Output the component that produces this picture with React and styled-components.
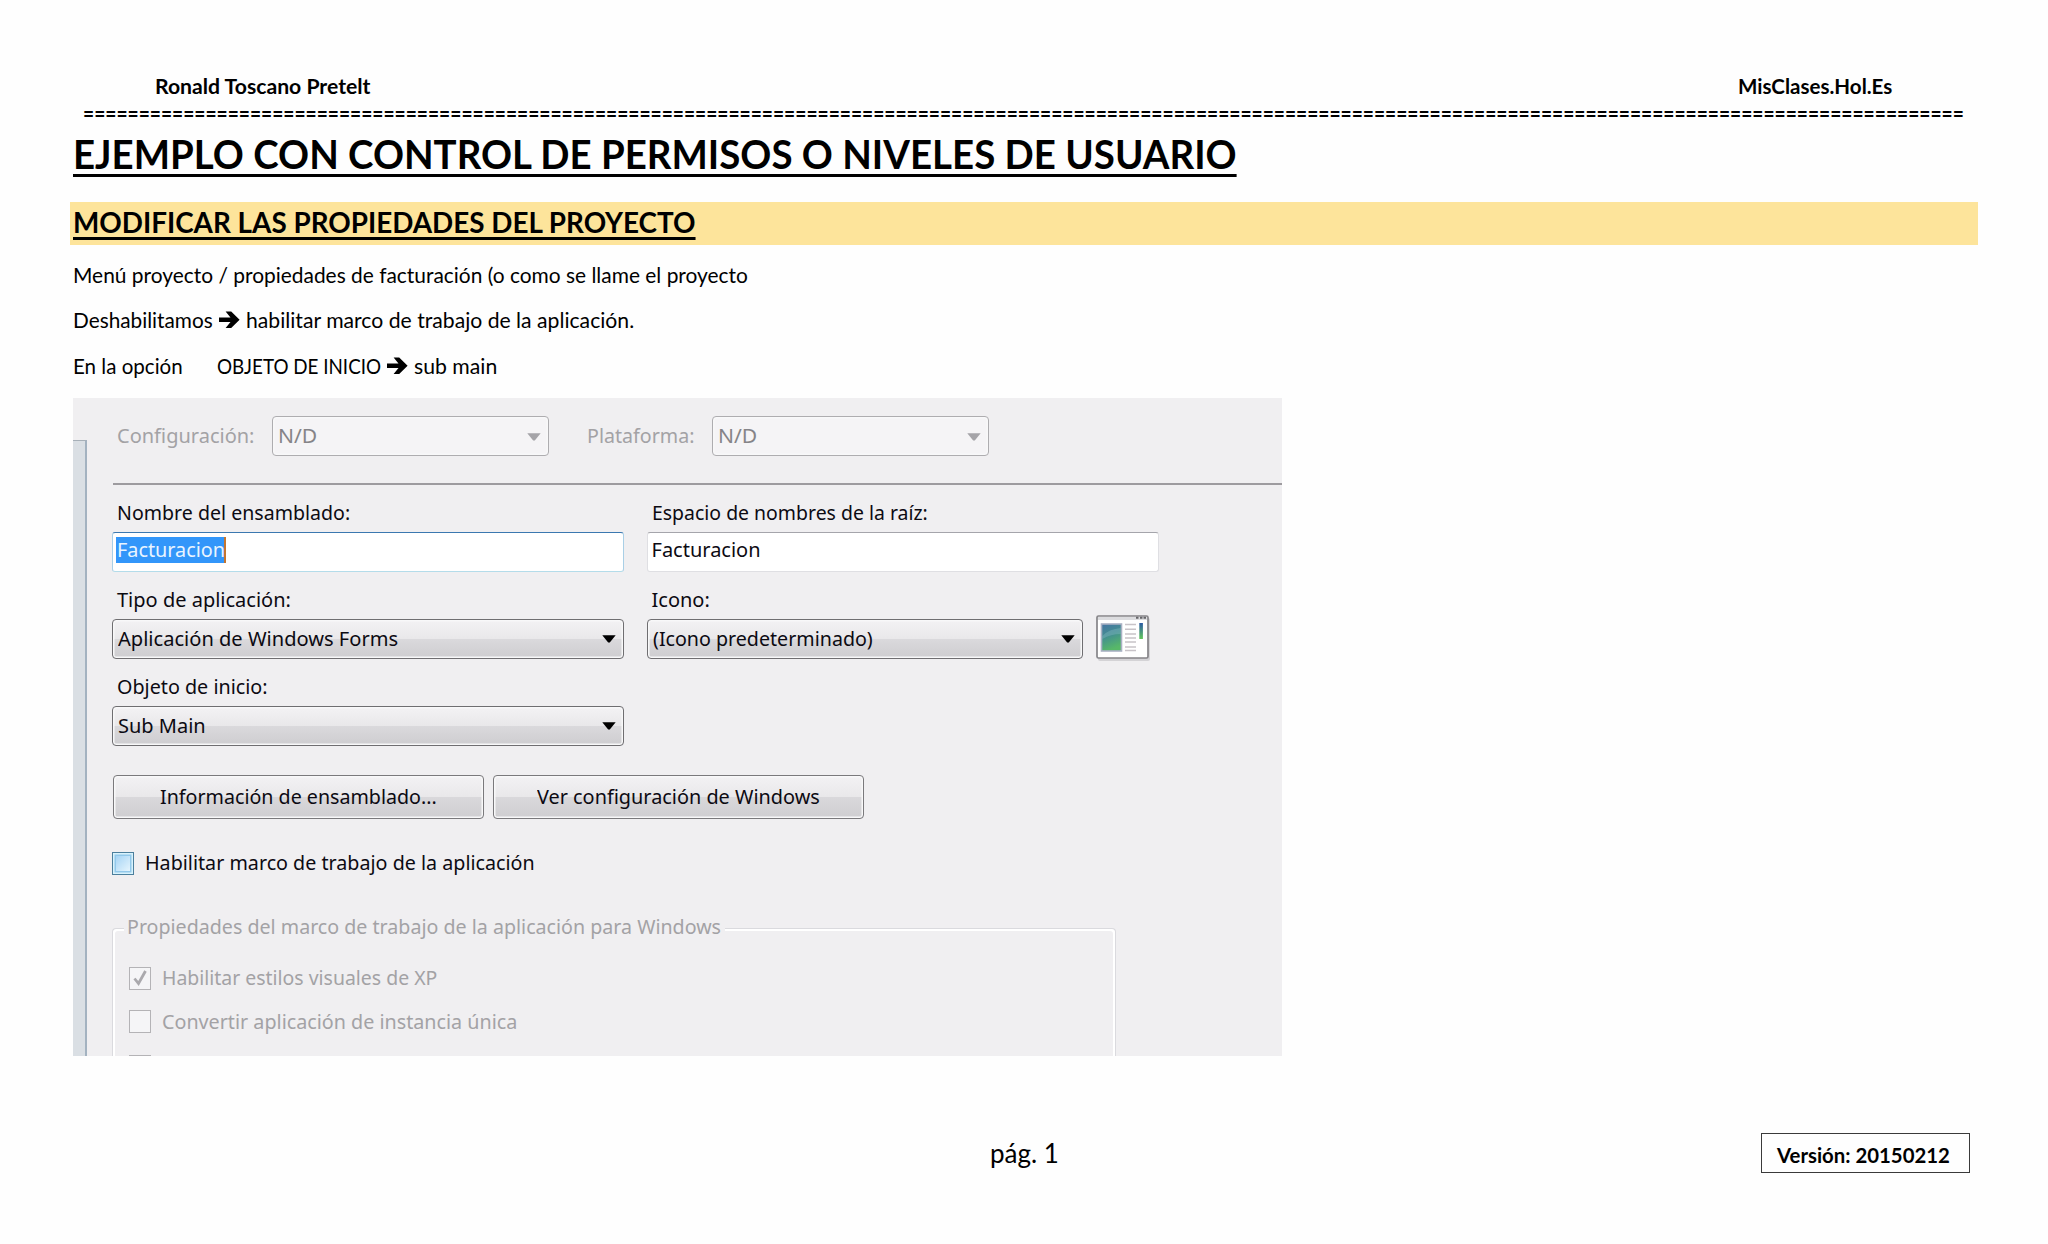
import React, { useLayoutEffect, useRef, useState } from 'react';
import styled, { createGlobalStyle, css } from 'styled-components';

const Global = createGlobalStyle`
  *, *::before, *::after { box-sizing: border-box; }
  body { margin: 0; background: #fefefe; }
`;

const docFont = "Lato, 'Liberation Sans', sans-serif";
const formFont = "'Noto Sans', 'Liberation Sans', sans-serif";

/* ---------- text set to an exact measure ---------- */

const Measure = styled.span`
  display: block;
  flex: none;
  width: ${(p) => p.$width}px;
  margin-left: ${(p) => p.$gap || 0}px;
  white-space: pre;
`;

const Glyphs = styled.span`
  display: inline-block;
  transform-origin: 0 50%;
`;

function Fit({ width, gap, children }) {
  const ref = useRef(null);
  const [scale, setScale] = useState(1);
  useLayoutEffect(() => {
    setScale(width / ref.current.offsetWidth);
  }, [width]);
  return (
    <Measure $width={width} $gap={gap}>
      <Glyphs ref={ref} style={{ transform: `scaleX(${scale})` }}>{children}</Glyphs>
    </Measure>
  );
}

/* ---------- document ---------- */

const Page = styled.main`
  display: flex;
  flex-direction: column;
  width: 2048px;
  height: 1244px;
  padding-top: 73px;
  overflow: hidden;
  background: #fefefe;
  color: #000;
  font: 400 20.2px/26px ${docFont};
`;

const Header = styled.header`
  display: flex;
  justify-content: space-between;
  height: 26px;
  padding: 0 156px 0 155px;
  font-size: 20px;
  font-weight: 700;
`;

const Rule = styled.div`
  height: 24px;
  margin: 2px 0 0 83px;
  font-weight: 700;
  line-height: 24px;
`;

const Title = styled.h1`
  height: 50px;
  margin: 4px 0 0 73px;
  font-size: 39.8px;
  font-weight: 700;
  line-height: 50px;
`;

const Banner = styled.h2`
  width: 1908px;
  height: 42.5px;
  margin: 23px 0 7.5px 70px;
  padding-left: 3px;
  background: #fde49b;
  font-size: 28.2px;
  font-weight: 700;
  line-height: 41px;
`;

const Underlined = styled.span`
  text-decoration: underline ${(p) => p.$thick}px;
  text-underline-offset: ${(p) => p.$offset}px;
  text-decoration-skip-ink: none;
`;

const Line = styled.p`
  display: flex;
  align-items: center;
  height: 45.5px;
  margin: 0;
  padding-left: 73px;
`;

const ArrowMark = styled.svg`
  display: block;
  flex: none;
  width: 21px;
  height: 18px;
  margin: 0 6px;
`;

const Arrow = () => (
  <ArrowMark viewBox="0 0 21 18">
    <path d="M0 6.6H11.5L6.6 .6H12.2L20.6 8.7 12.2 17H6.6L11.5 11H0Z" />
  </ArrowMark>
);

const Footer = styled.footer`
  display: grid;
  grid-template-columns: 1760px 210px;
  align-items: center;
  height: 40px;
  margin-top: 77px;
`;

const PageNumber = styled.div`
  padding-left: 990px;
  font-size: 26px;
  line-height: 40px;
`;

const Version = styled.div`
  height: 40px;
  margin-left: 1px;
  padding-left: 15px;
  border: 1.5px solid #3a3a3a;
  font-size: 20px;
  font-weight: 700;
  line-height: 42px;
`;

/* ---------- project properties form ---------- */

const Panel = styled.section`
  display: flex;
  width: 1208.5px;
  height: 658px;
  margin: 9px 0 0 73px;
  overflow: hidden;
  background: #f0eff1;
  color: #0c0a12;
  font: 400 20px/26px ${formFont};
`;

const Strip = styled.div`
  flex: none;
  width: 14px;
  margin-top: 42px;
  border-top: 1.5px solid #a7b0b8;
  border-right: 2px solid #a3b2c0;
  background: #dadfe4;
`;

const Form = styled.div`
  flex: 1;
  padding: 18.5px 0 0 25px;
`;

const Toolbar = styled.div`
  display: flex;
  align-items: center;
  height: 40px;
  padding-left: 5px;
  color: #a3a2a5;
`;

const Divider = styled.div`
  height: 2px;
  margin: 26.5px 0 15.5px 1px;
  background: #9d9b9f;
`;

const Fields = styled.div`
  display: grid;
  grid-template-columns: 512px 512px;
  column-gap: 22.5px;
  row-gap: 15.5px;
`;

const Field = styled.div`
  display: flex;
  flex-direction: column;
  gap: 5.5px;
`;

const Label = styled.div`
  height: 26px;
  padding-left: 5px;
`;

const Input = styled.div`
  display: flex;
  height: 40px;
  padding: 5px 4px;
  border: 1.5px solid #dfdfe3;
  border-top-color: #a5a5ab;
  border-radius: 3px;
  background: #fff;
  line-height: 24px;
  ${(p) => p.$focused && css`
    border-color: #a9cfe6;
    border-top-color: #3b78b0;
    border-bottom-color: #b4dcea;
    padding: 4px 3px;
    line-height: 26px;
  `}
`;

const Selection = styled.span`
  height: 26px;
  width: 110px;
  padding-left: 1px;
  border-right: 2px solid #c4752f;
  background: #3296fa;
  color: #e8f4ff;
`;

const SelectBox = styled.div`
  display: flex;
  align-items: center;
  justify-content: space-between;
  flex: none;
  width: ${(p) => p.$width}px;
  height: 40px;
  margin-left: ${(p) => p.$gap || 0}px;
  padding: 0 7px 0 5px;
  border: 1.75px solid #6f6e71;
  border-radius: 4px;
  background: linear-gradient(#f3f2f4, #e9e8ea 49%, #dad9dc 51%, #cecdd0);
  box-shadow: inset 0 0 0 1.5px #f8f8f9;
  ${(p) => p.$disabled && css`
    border-color: #aeadb0;
    background: #f5f4f6;
    color: #858488;
  `}
`;

const Caret = styled.svg`
  display: block;
  width: 14px;
  height: 8px;
  margin-top: 1px;
  fill: ${(p) => (p.$disabled ? '#a5a4a8' : '#000')};
`;

function Select({ width, gap, disabled, textWidth, children }) {
  return (
    <SelectBox $width={width} $gap={gap} $disabled={disabled}>
      <Fit width={textWidth}>{children}</Fit>
      <Caret $disabled={disabled} viewBox="0 0 14 8"><path d="M.3 .3H13.7L7.8 7.6H6.2Z" /></Caret>
    </SelectBox>
  );
}

const IconRow = styled.div`
  display: flex;
  align-items: flex-start;
  gap: 13.5px;
  height: 40px;
`;

const WindowIcon = styled.svg`
  display: block;
  flex: none;
  width: 56px;
  height: 47px;
  margin-top: -4px;
`;

const Buttons = styled.div`
  display: flex;
  gap: 9px;
  margin: 29.5px 0 32px 1px;
`;

const Button = styled.div`
  display: flex;
  justify-content: center;
  width: 371px;
  height: 43.5px;
  margin-bottom: 0.5px;
  border: 1.75px solid #7a797c;
  border-radius: 4px;
  background: linear-gradient(#f3f2f4, #e9e8ea 49%, #d9d8db 51%, #cfced1);
  box-shadow: inset 0 0 0 1.5px #f8f8f9;
  line-height: 42px;
`;

const CheckRow = styled.div`
  display: flex;
  align-items: center;
  height: 24px;
  line-height: 24px;
  margin-bottom: ${(p) => p.$after || 0}px;
`;

const Box = styled.span`
  display: flex;
  flex: none;
  align-items: center;
  justify-content: center;
  width: 22.5px;
  height: 23px;
  border: 1.75px solid #b4b3b6;
  background: #f5f5f7;
  ${(p) => p.$hot && css`
    margin-left: -0.5px;
    border-color: #4b7f9d;
    background: linear-gradient(135deg, #a2d2f4, #e9f7fe) content-box, #d5f0fb;
    padding: 2px;
    box-shadow: inset 0 0 0 1.5px #d8f2fc, inset 0 0 0 3px #92c8ea;
  `}
`;

const Tick = styled.svg`
  display: block;
  width: 14px;
  height: 16px;
  fill: none;
  stroke: #aaa9ad;
  stroke-width: 2.8;
`;

const Group = styled.div`
  width: 1004.5px;
  margin: 39px 0 0 -0.5px;
  color: #a3a2a5;
`;

const Legend = styled.div`
  display: flex;
  height: 26px;
  line-height: 26px;
`;

const Edge = styled.span`
  flex: ${(p) => (p.$short ? '0 0 12px' : '1')};
  align-self: flex-end;
  height: 12px;
  margin-left: ${(p) => (p.$short ? 0 : 4)}px;
  border: 0 solid #dadade;
  border-top-width: 1.5px;
  ${(p) => (p.$short
    ? 'border-left-width: 1.5px; border-top-left-radius: 4px; box-shadow: inset 2px 2px 0 #fff;'
    : 'border-right-width: 1.5px; border-top-right-radius: 4px; box-shadow: inset -2px 2px 0 #fff;')}
`;

const GroupBody = styled.div`
  height: 120px;
  padding: 26px 0 0 16px;
  border: 0 solid #dadade;
  border-left-width: 1.5px;
  border-right-width: 1.5px;
  box-shadow: inset 2px 0 0 #fff, inset -2px 0 0 #fff;
`;

const PreviewIcon = () => (
  <WindowIcon viewBox="0 0 56 47">
    <defs>
      <linearGradient id="photo" x1="0" y1="0" x2=".3" y2="1">
        <stop offset="0" stopColor="#4573a4" />
        <stop offset=".5" stopColor="#43908f" />
        <stop offset="1" stopColor="#57b868" />
      </linearGradient>
      <linearGradient id="bar" x1="0" y1="0" x2="0" y2="1">
        <stop offset="0" stopColor="#2c5aa4" />
        <stop offset="1" stopColor="#62c85a" />
      </linearGradient>
    </defs>
    <rect x="2" y="3" width="52" height="43" rx="2" fill="#d4d3d6" />
    <rect x="1" y="1" width="51" height="42" rx="1.5" fill="#fff" stroke="#858488" strokeWidth="1.7" />
    <path d="M2 2H51V5H2Z" fill="#dcdcdf" />
    <path d="M40 2.8H42.5M44 2.8H46.5M47.5 2.8H50" stroke="#66656a" strokeWidth="2" />
    <rect x="5.5" y="9" width="20" height="27" fill="url(#photo)" stroke="#a9b1c4" strokeWidth="1.6" />
    <path d="M6.3 21Q13 14 24.7 13V19Q15 19 6.3 24Z" fill="#8ec0cb" opacity=".35" />
    <path d="M29 9.5H40M29 14.3H40M29 19H40M29 23H40M29 27H40M29 32H40M29 35.5H40" stroke="#c8c3c8" strokeWidth="1.4" />
    <rect x="43.3" y="8" width="3.6" height="16" fill="url(#bar)" />
  </WindowIcon>
);

export default function App() {
  return (
    <Page>
      <Global />
      <Header>
        <Fit width={215}>Ronald Toscano Pretelt</Fit>
        <Fit width={154}>MisClases.Hol.Es</Fit>
      </Header>
      <Rule><Fit width={1881}>{'='.repeat(169)}</Fit></Rule>
      <Title>
        <Fit width={1164}>
          <Underlined $thick={3} $offset={5}>EJEMPLO CON CONTROL DE PERMISOS O NIVELES DE USUARIO</Underlined>
        </Fit>
      </Title>
      <Banner>
        <Fit width={623}>
          <Underlined $thick={2.5} $offset={3.5}>MODIFICAR LAS PROPIEDADES DEL PROYECTO</Underlined>
        </Fit>
      </Banner>
      <Line><Fit width={674.5}>Menú proyecto / propiedades de facturación (o como se llame el proyecto</Fit></Line>
      <Line>
        <Fit width={140}>Deshabilitamos</Fit>
        <Arrow />
        <Fit width={388}>habilitar marco de trabajo de la aplicación.</Fit>
      </Line>
      <Line>
        <Fit width={110}>En la opción</Fit>
        <Fit width={164} gap={34}>OBJETO DE INICIO</Fit>
        <Arrow />
        <Fit width={83}>sub main</Fit>
      </Line>

      <Panel>
        <Strip />
        <Form>
          <Toolbar>
            <Fit width={137}>Configuración:</Fit>
            <Select disabled width={277} gap={18} textWidth={39}>N/D</Select>
            <Fit width={107} gap={38}>Plataforma:</Fit>
            <Select disabled width={277} gap={18} textWidth={39}>N/D</Select>
          </Toolbar>
          <Divider />
          <Fields>
            <Field>
              <Label><Fit width={233}>Nombre del ensamblado:</Fit></Label>
              <Input $focused><Selection><Fit width={108}>Facturacion</Fit></Selection></Input>
            </Field>
            <Field>
              <Label><Fit width={276}>Espacio de nombres de la raíz:</Fit></Label>
              <Input><Fit width={109}>Facturacion</Fit></Input>
            </Field>
            <Field>
              <Label><Fit width={174}>Tipo de aplicación:</Fit></Label>
              <Select width={512} textWidth={280}>Aplicación de Windows Forms</Select>
            </Field>
            <Field>
              <Label><Fit width={58}>Icono:</Fit></Label>
              <IconRow>
                <Select width={436} textWidth={220}>(Icono predeterminado)</Select>
                <PreviewIcon />
              </IconRow>
            </Field>
            <Field>
              <Label><Fit width={151}>Objeto de inicio:</Fit></Label>
              <Select width={512} textWidth={88}>Sub Main</Select>
            </Field>
          </Fields>
          <Buttons>
            <Button><Fit width={277}>Información de ensamblado...</Fit></Button>
            <Button><Fit width={283}>Ver configuración de Windows</Fit></Button>
          </Buttons>
          <CheckRow>
            <Box $hot />
            <Fit width={390} gap={10.5}>Habilitar marco de trabajo de la aplicación</Fit>
          </CheckRow>
          <Group>
            <Legend>
              <Edge $short />
              <Fit width={594} gap={3}>Propiedades del marco de trabajo de la aplicación para Windows</Fit>
              <Edge />
            </Legend>
            <GroupBody>
              <CheckRow $after={19.5}>
                <Box><Tick viewBox="0 0 14 16"><path d="M1.5 8.5L5.5 13.5 12.5 1" /></Tick></Box>
                <Fit width={275} gap={10.5}>Habilitar estilos visuales de XP</Fit>
              </CheckRow>
              <CheckRow $after={20.5}>
                <Box />
                <Fit width={355} gap={10.5}>Convertir aplicación de instancia única</Fit>
              </CheckRow>
              <CheckRow><Box /></CheckRow>
            </GroupBody>
          </Group>
        </Form>
      </Panel>

      <Footer>
        <PageNumber><Fit width={69}>pág. 1</Fit></PageNumber>
        <Version><Fit width={173}>Versión: 20150212</Fit></Version>
      </Footer>
    </Page>
  );
}
